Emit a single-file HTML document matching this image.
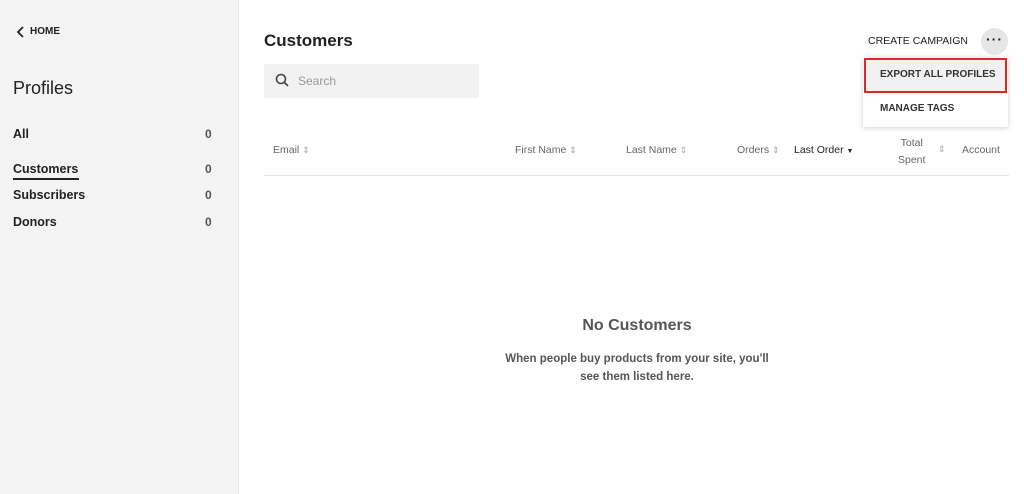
<!DOCTYPE html>
<html><head><style>
*{margin:0;padding:0;box-sizing:border-box}
body{width:1024px;height:494px;font-family:"Liberation Sans",sans-serif;background:#fff;position:relative;overflow:hidden;color:#222}
.side{position:absolute;left:0;top:0;width:239px;height:494px;background:#f4f4f4;border-right:1px solid #e8e8e8}
.a{position:absolute}
.nav{font-weight:bold;font-size:12.5px;color:#222}
.cnt{font-weight:bold;font-size:12px;color:#555;left:205px}
.th{font-size:10.5px;color:#666;top:144px}
.ar{color:#aaa;font-size:9px}
</style></head><body>
<div class="side">
<svg class="a" style="left:16px;top:26px" width="10" height="12"><path d="M7 1L2 6L7 11" stroke="#222" stroke-width="1.8" fill="none"/></svg>
<div class="a" style="left:30px;top:26px;font-size:10px;font-weight:bold">HOME</div>
<div class="a" style="left:13px;top:78px;font-size:18px;color:#222">Profiles</div>
<div class="a nav" style="left:13px;top:127px">All</div><div class="a cnt" style="top:127px">0</div>
<div class="a nav" style="left:13px;top:162px">Customers</div><div class="a" style="left:13px;top:178px;width:66px;height:2px;background:#222"></div><div class="a cnt" style="top:162px">0</div>
<div class="a nav" style="left:13px;top:188px">Subscribers</div><div class="a cnt" style="top:188px">0</div>
<div class="a nav" style="left:13px;top:215px">Donors</div><div class="a cnt" style="top:215px">0</div>
</div>
<div class="a" style="left:264px;top:31px;font-size:17px;font-weight:bold;color:#222">Customers</div>
<div class="a" style="left:264px;top:64px;width:215px;height:34px;background:#f2f2f2"></div>
<svg class="a" style="left:275px;top:73px" width="14" height="14"><circle cx="6" cy="6" r="4.5" stroke="#444" stroke-width="1.6" fill="none"/><path d="M9.5 9.5L13 13" stroke="#444" stroke-width="1.6"/></svg>
<div class="a" style="left:298px;top:74px;font-size:12px;color:#999">Search</div>
<div class="a" style="left:868px;top:35px;font-size:10.5px;color:#222">CREATE CAMPAIGN</div>
<div class="a" style="left:981px;top:28px;width:27px;height:27px;border-radius:50%;background:#e6e6e6;text-align:center;font-size:14px;line-height:22px;font-weight:bold;letter-spacing:1px">···</div>
<div class="a" style="left:863px;top:57px;width:145px;height:70px;background:#fff;box-shadow:0 1px 5px rgba(0,0,0,.18)"></div>
<div class="a" style="left:864px;top:58px;width:143px;height:35px;background:#f1f1f1;border:2px solid #d92a2a"></div>
<div class="a" style="left:880px;top:69px;font-size:10px;font-weight:bold;color:#333">EXPORT ALL PROFILES</div>
<div class="a" style="left:880px;top:103px;font-size:10px;font-weight:bold;color:#333">MANAGE TAGS</div>
<div class="a th" style="left:273px">Email <span class="ar">⇕</span></div>
<div class="a th" style="left:515px">First Name <span class="ar">⇕</span></div>
<div class="a th" style="left:626px">Last Name <span class="ar">⇕</span></div>
<div class="a th" style="left:737px">Orders <span class="ar">⇕</span></div>
<div class="a th" style="left:794px;color:#222">Last Order <span style="font-size:7px">▼</span></div>
<div class="a th" style="left:898px;top:135px;text-align:center;line-height:17px">Total<br>Spent</div>
<div class="a th ar" style="left:938px">⇕</div>
<div class="a th" style="left:962px">Account</div>
<div class="a" style="left:264px;top:175px;width:745px;height:1px;background:#e4e4e4"></div>
<div class="a" style="left:496px;top:317px;width:282px;text-align:center;font-size:16px;font-weight:bold;color:#555">No Customers</div>
<div class="a" style="left:494px;top:350px;width:286px;text-align:center;font-size:11.5px;font-weight:bold;color:#555;line-height:18px">When people buy products from your site, you'll<br>see them listed here.</div>
</body></html>
